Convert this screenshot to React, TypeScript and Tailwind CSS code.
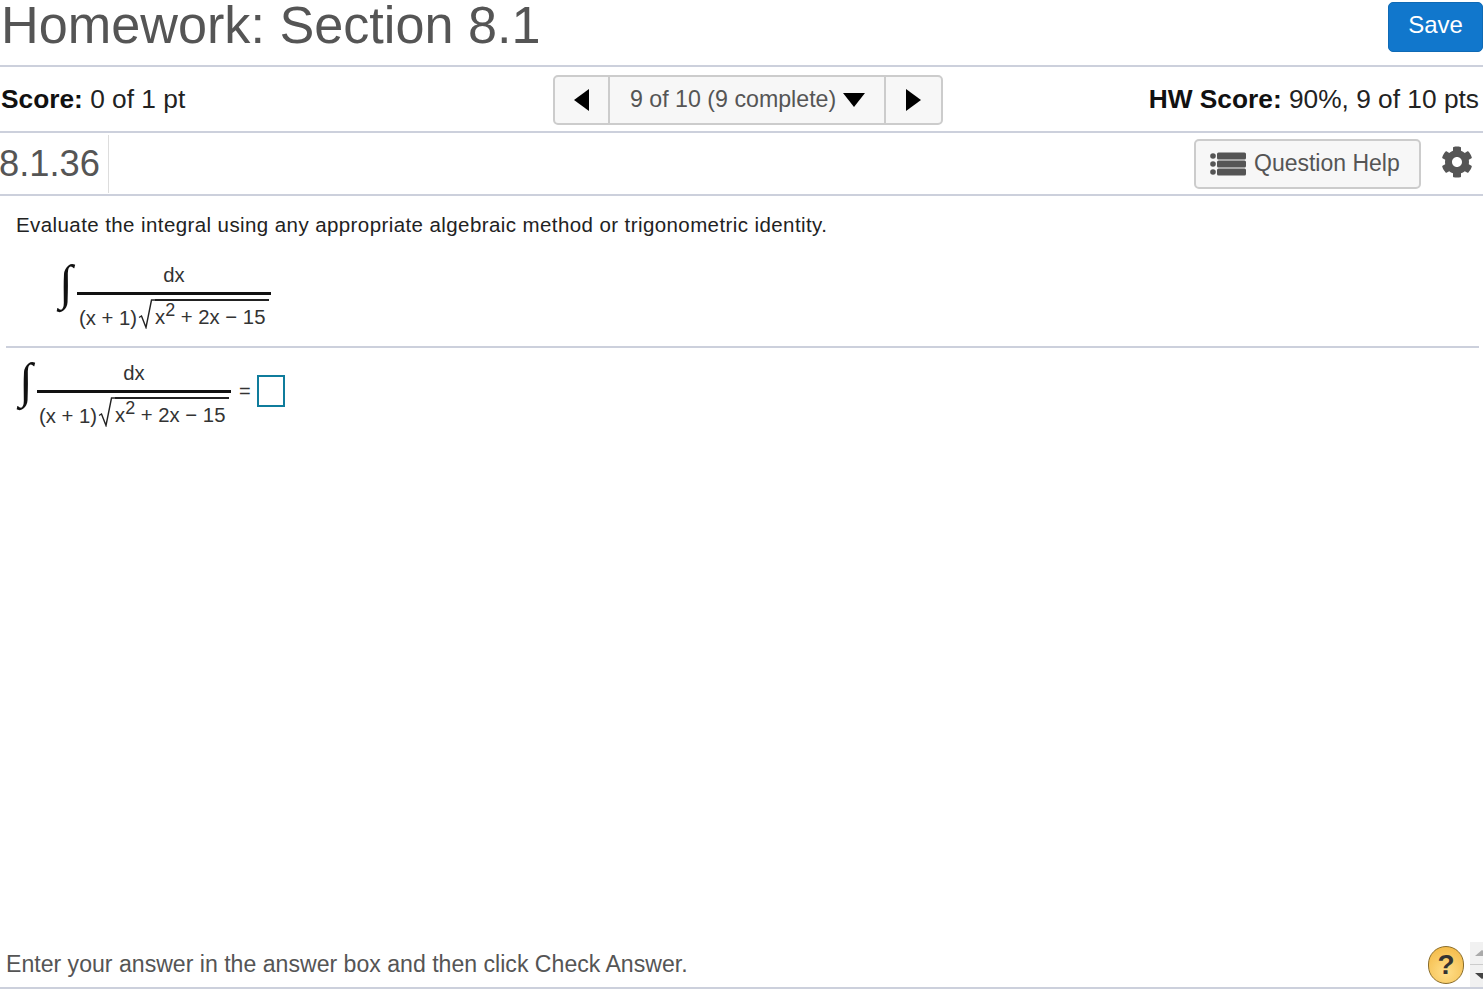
import React from "react";
import { FaCog } from "react-icons/fa";

const font = { fontFamily: '"Liberation Sans", Arial, sans-serif' };

const Radical = () => (
  <svg width="18" height="30" viewBox="0 0 18 30" className="shrink-0 block">
    <path d="M2 18.5 L4.5 17 L9 28.5 L14.5 1 L18 1" fill="none" stroke="#222" strokeWidth="1.4" />
  </svg>
);

const Integral = ({ className }: { className?: string }) => (
  <div className={`relative ${className}`}>
    <span className="absolute left-[2px] top-[-9px] text-[49px] leading-[70px] text-[#111] font-['Liberation_Serif']">∫</span>
  </div>
);

const Fraction = () => (
  <div className="flex flex-col w-[194px] text-[20.3px] text-[#333]">
    <div className="h-[35px] leading-[36px] text-center">dx</div>
    <div className="h-[3px] bg-[#111]" />
    <div className="flex h-[36px] pl-[2px] pt-[4px] items-start">
      <span className="leading-[36px] mt-[1px] whitespace-nowrap">(x + 1)</span>
      <Radical />
      <div className="border-t-2 border-[#222] h-[31px] w-[114px] whitespace-nowrap leading-[32px]">
        x<sup className="text-[18px] align-baseline relative top-[-8px]">2</sup> + 2x − 15
      </div>
    </div>
  </div>
);

const ListIcon = () => (
  <svg width="36" height="24" viewBox="0 0 36 24" className="shrink-0">
    <g fill="#555">
      <circle cx="3" cy="4" r="2.8" />
      <circle cx="3" cy="12" r="2.8" />
      <circle cx="3" cy="20" r="2.8" />
      <rect x="7" y="0.5" width="29" height="7" rx="1.5" />
      <rect x="7" y="8.5" width="29" height="7" rx="1.5" />
      <rect x="7" y="16.5" width="29" height="7" rx="1.5" />
    </g>
  </svg>
);

export default function App() {
  return (
    <div style={font} className="relative w-[1483px] h-[989px] overflow-hidden bg-white flex flex-col">
      <div className="h-[67px] shrink-0 border-b-2 border-[#ccd0dc] flex items-start justify-between">
        <h1 className="text-[52.2px] leading-[50px] text-[#555] pl-[1px] whitespace-nowrap">Homework: Section 8.1</h1>
        <button className="mt-[2px] w-[95px] h-[50px] pb-[4px] bg-[#1177cc] border border-[#0f6ab5] rounded-[5px] text-white text-[24px]">Save</button>
      </div>

      <div className="h-[66px] shrink-0 border-b-2 border-[#ccd0dc] flex items-center text-[26.3px] text-[#222]">
        <div className="w-[553px] pl-[1px] pt-[2px]"><b className="text-[#111]">Score:</b> 0 of 1 pt</div>
        <div className="flex h-[50px] mt-[1px] w-[390px] border-2 border-[#ccc] rounded-[5px] bg-[#f7f7f7] text-[#555] text-[23.2px]">
          <div className="w-[55px] flex items-center justify-center border-r-2 border-[#ccc]">
            <div className="w-0 h-0 border-y-[11px] border-y-transparent border-r-[15px] border-r-black" />
          </div>
          <div className="flex-1 flex items-center pl-[20px] gap-[7px]">
            <span>9 of 10 (9 complete)</span>
            <div className="w-0 h-0 border-x-[11px] border-x-transparent border-t-[14px] border-t-black" />
          </div>
          <div className="w-[57px] flex items-center justify-center border-l-2 border-[#ccc]">
            <div className="w-0 h-0 border-y-[11px] border-y-transparent border-l-[15px] border-l-black" />
          </div>
        </div>
        <div className="flex-1 text-right pr-[4px] pt-[2px]"><b className="text-[#111]">HW Score:</b> 90%, 9 of 10 pts</div>
      </div>

      <div className="h-[63px] shrink-0 border-b-2 border-[#ccd0dc] flex items-center justify-between">
        <div className="flex h-[58px] mt-[1px] -ml-[1px] items-center border-r border-[#ddd] pr-[8px] text-[36.3px] text-[#555]">8.1.36</div>
        <div className="flex items-center">
          <button className="flex items-center w-[227px] h-[50px] border-2 border-[#ccc] rounded-[5px] bg-[#f7f7f7] pl-[14px] gap-[8px] text-[23px] text-[#555]">
            <ListIcon />
            <span>Question Help</span>
          </button>
          <div className="w-[62px] pl-[20px] pb-[3px]"><FaCog size={32} color="#555" /></div>
        </div>
      </div>

      <div className="flex-1 flex flex-col">
        <p className="pl-[16px] pt-[17px] text-[20.5px] tracking-[0.41px] leading-[24px] text-[#222]">Evaluate the integral using any appropriate algebraic method or trigonometric identity.</p>
        <div className="flex pl-[57px] mt-[20px] h-[87px]">
          <Integral className="w-[20px]" />
          <Fraction />
        </div>
        <div className="ml-[6px] mr-[4px] h-[2px] bg-[#ccd0dc] mt-[2px]" />
        <div className="flex items-start pl-[17px] mt-[7px]">
          <Integral className="w-[20px] h-[80px]" />
          <Fraction />
          <span className="text-[20px] text-[#333] ml-[8px] mt-[21px]">=</span>
          <div className="w-[28px] h-[32px] border-2 border-[#0f7c9c] ml-[6px] mt-[20px]" />
        </div>
        <div className="flex-1" />
      </div>

      <div className="h-[46px] shrink-0 border-b-2 border-[#ccd0dc] flex items-center pl-[6px] pb-[1px] text-[23.1px] text-[#555]">
        Enter your answer in the answer box and then click Check Answer.
      </div>

      <div className="absolute left-[1428px] top-[946px] w-[36px] h-[38px] rounded-full border border-[#8a6d2a] bg-[radial-gradient(circle_at_50%_70%,#ffdf8a,#f2b53e)] flex items-center justify-center text-[28px] font-bold text-[#333]">?</div>
      <div className="absolute left-[1470px] top-[942px] w-[13px] h-[45px] bg-[#f1f1f1] flex flex-col">
        <div className="h-[23px] border-b border-[#ccc] flex items-center pl-[5px]">
          <div className="w-0 h-0 border-x-[7px] border-x-transparent border-b-[6px] border-b-[#aaa]" />
        </div>
        <div className="flex-1 flex items-center pl-[5px]">
          <div className="w-0 h-0 border-x-[7px] border-x-transparent border-t-[6px] border-t-[#444]" />
        </div>
      </div>
    </div>
  );
}
